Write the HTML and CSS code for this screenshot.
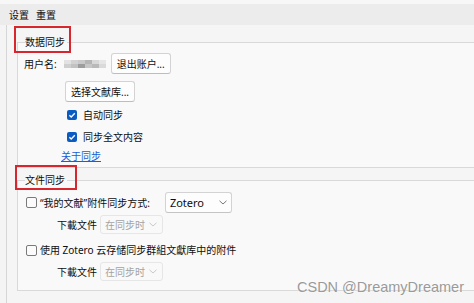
FILE: index.html
```html
<!DOCTYPE html>
<html lang="zh">
<head>
<meta charset="utf-8">
<title>同步设置</title>
<link rel="stylesheet" href="styles.css">
</head>
<body>
<div class="tabs">
  <span class="tab active">设置</span>
  <span class="tab">重置</span>
</div>
<div class="panel">
  <section class="group g1">
    <div class="legend">数据同步</div>
    <div class="row user">
      <span class="label">用户名:</span>
      <span class="mosaic">
        <i class="m1"></i><i class="m2"></i><i class="m3"></i><i class="m4"></i><i class="m5"></i><i class="m6"></i>
        <i class="m7"></i><i class="m8"></i><i class="m9"></i><i class="m10"></i><i class="m11"></i><i class="m12"></i>
      </span>
      <button class="btn">退出账户...</button>
    </div>
    <div class="row lib">
      <button class="btn">选择文献库...</button>
    </div>
    <div class="row check c1">
      <span class="cb on"><svg viewBox="0 0 10 10" width="10" height="10"><polyline points="2.4,5.2 4.2,7 7.8,3.2" fill="none" stroke="#fff" stroke-width="1.3"/></svg></span>
      <span>自动同步</span>
    </div>
    <div class="row check c2">
      <span class="cb on"><svg viewBox="0 0 10 10" width="10" height="10"><polyline points="2.4,5.2 4.2,7 7.8,3.2" fill="none" stroke="#fff" stroke-width="1.3"/></svg></span>
      <span>同步全文内容</span>
    </div>
    <div class="row linkrow"><a class="link" href="#">关于同步</a></div>
  </section>

  <section class="group g2">
    <div class="legend">文件同步</div>
    <div class="row opt r1">
      <span class="cb"></span>
      <span class="txt">“我的文献”附件同步方式:</span>
      <span class="select">Zotero<svg class="chev" viewBox="0 0 8 5" width="8" height="5"><polyline points="0.5,0.8 4,4 7.5,0.8" fill="none" stroke="#6a6a6a" stroke-width="0.9"/></svg></span>
    </div>
    <div class="row sub r2">
      <span class="sublabel">下載文件</span>
      <span class="select disabled">在同步时<svg class="chev" viewBox="0 0 8 5" width="8" height="5"><polyline points="0.5,0.8 4,4 7.5,0.8" fill="none" stroke="#c4c4c4" stroke-width="0.9"/></svg></span>
    </div>
    <div class="row opt r3">
      <span class="cb"></span>
      <span class="txt">使用 Zotero 云存储同步群組文獻库中的附件</span>
    </div>
    <div class="row sub r4">
      <span class="sublabel">下載文件</span>
      <span class="select disabled">在同步时<svg class="chev" viewBox="0 0 8 5" width="8" height="5"><polyline points="0.5,0.8 4,4 7.5,0.8" fill="none" stroke="#c4c4c4" stroke-width="0.9"/></svg></span>
    </div>
  </section>
</div>
<div class="watermark">CSDN @DreamyDreamer</div>
</body>
</html>
```

FILE: styles.css
```css
html, body {
  margin: 0;
  padding: 0;
}
body {
  width: 474px;
  height: 303px;
  overflow: hidden;
  position: relative;
  background: #f4f4f4;
  font-family: "Noto Sans", "Noto Sans CJK SC", sans-serif;
  font-size: 10px;
  color: #0e0e0e;
}

.tabs {
  height: 25px;
  box-sizing: border-box;
  display: flex;
  gap: 7px;
  padding: 8px 0 0 9px;
  background: linear-gradient(#f7f7f7 0 4px, #ececec 4px);
}
.tab {
  line-height: 14px;
  height: 14px;
}

.panel {
  margin-left: 6px;
  border-left: 1px solid #d6d6d6;
  padding-top: 17px;
  height: 278px;
  box-sizing: border-box;
  background: #f5f5f5;
}

.group {
  margin-left: 10px;
  border: 1px solid #d9d9d9;
  border-right: none;
  background: #f9f9f9;
  padding-left: 6px;
  display: flex;
  flex-direction: column;
  align-items: flex-start;
}
.g1 { padding-bottom: 3px; }
.g2 { margin-top: 12px; padding-bottom: 9px; }

.legend {
  position: relative;
  margin-top: -8px;
  margin-left: 1px;
  padding: 0 2px 0 0;
  line-height: 14px;
  height: 14px;
  background: linear-gradient(#f5f5f5 0 50%, #f9f9f9 50%);
}
.legend::after {
  content: "";
  position: absolute;
  left: -11px;
  top: -9px;
  right: -4px;
  bottom: -4px;
  border: 2px solid #d7262e;
}
.g2 .legend::after {
  left: -10px;
  right: -10px;
  top: -8px;
  bottom: -3px;
}

.row {
  display: flex;
  align-items: center;
  line-height: 16px;
}

.user { margin-top: 4px; height: 21px; }
.label { margin-right: 7px; }
.mosaic {
  display: grid;
  grid-template-columns: repeat(6, 7px);
  grid-template-rows: 4px 4px;
  width: 42px;
  height: 8px;
}
.mosaic i { display: block; }
.m1 { background: #e2e2e2; } .m2 { background: #d2d2d2; } .m3 { background: #c9c9c9; }
.m4 { background: #b5b5b5; } .m5 { background: #d8d8d8; } .m6 { background: #e6e6e6; }
.m7 { background: #cfcfcf; } .m8 { background: #c2c2c2; } .m9 { background: #9d9d9d; }
.m10 { background: #c6c6c6; } .m11 { background: #b9b9b9; } .m12 { background: #dadada; }

.btn {
  font: inherit;
  color: #0e0e0e;
  height: 21px;
  padding: 0 5px;
  background: #fdfdfd;
  border: 1px solid #d3d3d3;
  border-bottom-color: #bdbdbd;
  border-radius: 3px;
  line-height: 18px;
}
.user .btn { margin-left: 5px; }

.lib { margin-top: 7px; margin-left: 41px; height: 21px; }

.check { height: 16px; margin-left: 43px; }
.c1 { margin-top: 5px; }
.c2 { margin-top: 6px; }
.check .cb { margin-right: 6px; }

.cb {
  width: 10px;
  height: 10px;
  box-sizing: border-box;
  border-radius: 2px;
  display: inline-flex;
  flex: none;
}
.cb.on {
  background: #0b5cc2;
}
.cb:not(.on) {
  width: 11px;
  height: 11px;
  border: 1px solid #7a7a7a;
  background: #fbfbfb;
}

.linkrow { margin-top: 3px; margin-left: 37px; height: 16px; }
.link {
  color: #1560d3;
  text-decoration: underline;
  text-underline-offset: 1px;
}

.opt { margin-left: 2px; }
.opt .cb { margin-right: 3px; }
.r1 { margin-top: 5px; height: 21px; }
.r3 { margin-top: 8px; height: 16px; }

.select {
  position: relative;
  box-sizing: border-box;
  display: flex;
  align-items: center;
  background: #fdfdfd;
  border: 1px solid #d3d3d3;
  border-bottom-color: #c4c4c4;
  border-radius: 3px;
  padding-left: 4px;
}
.r1 .select {
  margin-left: 15px;
  width: 67px;
  height: 21px;
  font-size: 11px;
}
.chev {
  position: absolute;
  right: 4px;
  top: 7px;
}
.select.disabled {
  width: 63px;
  height: 19px;
  background: #f9f9f9;
  border-color: #e6e6e6;
  color: #a3a3a3;
}
.select.disabled .chev { top: 6px; right: 5px; }

.sub { margin-left: 33px; height: 19px; }
.sublabel { margin-right: 3px; }
.r2 { margin-top: 2px; }
.r4 { margin-top: 4px; }

.watermark {
  position: absolute;
  left: 297px;
  top: 279px;
  font-family: "Liberation Sans", sans-serif;
  font-size: 14.5px;
  line-height: 16px;
  color: #9a9a9a;
  text-shadow: 0 0 2px #fff;
}
```
